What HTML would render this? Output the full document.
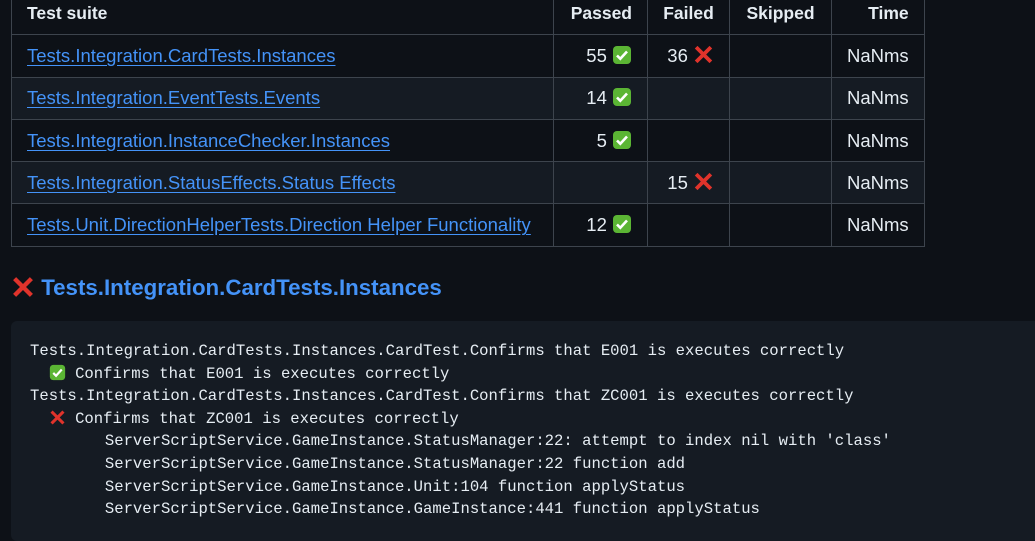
<!DOCTYPE html>
<html><head><meta charset="utf-8"><style>
body{margin:0;background:#0d1117;width:1035px;height:520px;overflow:hidden;font-family:"Liberation Sans",sans-serif;color:#e6edf3;position:relative}
table{position:absolute;left:11px;top:-8px;border-collapse:collapse;font-size:18.5px}
td,th{border:1px solid #3d444d;padding:0 15px;height:41.3px;white-space:nowrap}
th{font-weight:bold;font-size:17.5px}
tr.a td{background:#0d1117}tr.b td{background:#151b23}
td.n{text-align:right}
a{color:#4493f8;text-decoration:underline;text-underline-offset:3px}
svg{vertical-align:-3px}
h2{position:absolute;left:11px;top:275px;margin:0;font-size:22.3px;font-weight:bold;color:#4493f8}
pre{position:absolute;left:11px;top:321px;width:1040px;height:220px;margin:0;background:#151b23;border-radius:6px;font-family:"Liberation Mono",monospace;font-size:15.6px;line-height:22.6px;padding:19px 19px;box-sizing:border-box;color:#e6edf3}
</style></head><body>
<table>
<tr class="a"><th style="text-align:left;width:511px">Test suite</th><th style="width:63px;text-align:right">Passed</th><th style="width:51px">Failed</th><th style="width:71px">Skipped</th><th style="width:61px;text-align:right">Time</th></tr>
<tr class="a"><td><a>Tests.Integration.CardTests.Instances</a></td><td class="n">55 <svg width="20" height="20" viewBox="0 0 20 20"><rect x="1" y="1" width="18" height="18" rx="4" fill="#5bb534"/><path d="M5 10.5l3.3 3.3L15 6.5" stroke="#fff" stroke-width="2.6" fill="none"/></svg></td><td class="n">36 <svg width="21" height="21" viewBox="0 0 20 20"><path d="M3 3L17 17M17 3L3 17" stroke="#e0332b" stroke-width="3.6"/></svg></td><td></td><td class="n">NaNms</td></tr>
<tr class="b"><td><a>Tests.Integration.EventTests.Events</a></td><td class="n">14 <svg width="20" height="20" viewBox="0 0 20 20"><rect x="1" y="1" width="18" height="18" rx="4" fill="#5bb534"/><path d="M5 10.5l3.3 3.3L15 6.5" stroke="#fff" stroke-width="2.6" fill="none"/></svg></td><td></td><td></td><td class="n">NaNms</td></tr>
<tr class="a"><td><a>Tests.Integration.InstanceChecker.Instances</a></td><td class="n">5 <svg width="20" height="20" viewBox="0 0 20 20"><rect x="1" y="1" width="18" height="18" rx="4" fill="#5bb534"/><path d="M5 10.5l3.3 3.3L15 6.5" stroke="#fff" stroke-width="2.6" fill="none"/></svg></td><td></td><td></td><td class="n">NaNms</td></tr>
<tr class="b"><td><a>Tests.Integration.StatusEffects.Status Effects</a></td><td></td><td class="n">15 <svg width="21" height="21" viewBox="0 0 20 20"><path d="M3 3L17 17M17 3L3 17" stroke="#e0332b" stroke-width="3.6"/></svg></td><td></td><td class="n">NaNms</td></tr>
<tr class="a"><td><a>Tests.Unit.DirectionHelperTests.Direction Helper Functionality</a></td><td class="n">12 <svg width="20" height="20" viewBox="0 0 20 20"><rect x="1" y="1" width="18" height="18" rx="4" fill="#5bb534"/><path d="M5 10.5l3.3 3.3L15 6.5" stroke="#fff" stroke-width="2.6" fill="none"/></svg></td><td></td><td></td><td class="n">NaNms</td></tr>
</table>
<h2><svg width="24" height="24" viewBox="0 0 20 20" style="vertical-align:-4px"><path d="M3 3L17 17M17 3L3 17" stroke="#e0332b" stroke-width="3.6"/></svg> Tests.Integration.CardTests.Instances</h2>
<pre>Tests.Integration.CardTests.Instances.CardTest.Confirms that E001 is executes correctly
  <svg width="17" height="17" viewBox="0 0 20 20"><rect x="1" y="1" width="18" height="18" rx="4" fill="#5bb534"/><path d="M5 10.5l3.3 3.3L15 6.5" stroke="#fff" stroke-width="2.6" fill="none"/></svg> Confirms that E001 is executes correctly
Tests.Integration.CardTests.Instances.CardTest.Confirms that ZC001 is executes correctly
  <svg width="17" height="17" viewBox="0 0 20 20"><path d="M3 3L17 17M17 3L3 17" stroke="#e0332b" stroke-width="3.6"/></svg> Confirms that ZC001 is executes correctly
        ServerScriptService.GameInstance.StatusManager:22: attempt to index nil with 'class'
        ServerScriptService.GameInstance.StatusManager:22 function add
        ServerScriptService.GameInstance.Unit:104 function applyStatus
        ServerScriptService.GameInstance.GameInstance:441 function applyStatus</pre>
</body></html>
